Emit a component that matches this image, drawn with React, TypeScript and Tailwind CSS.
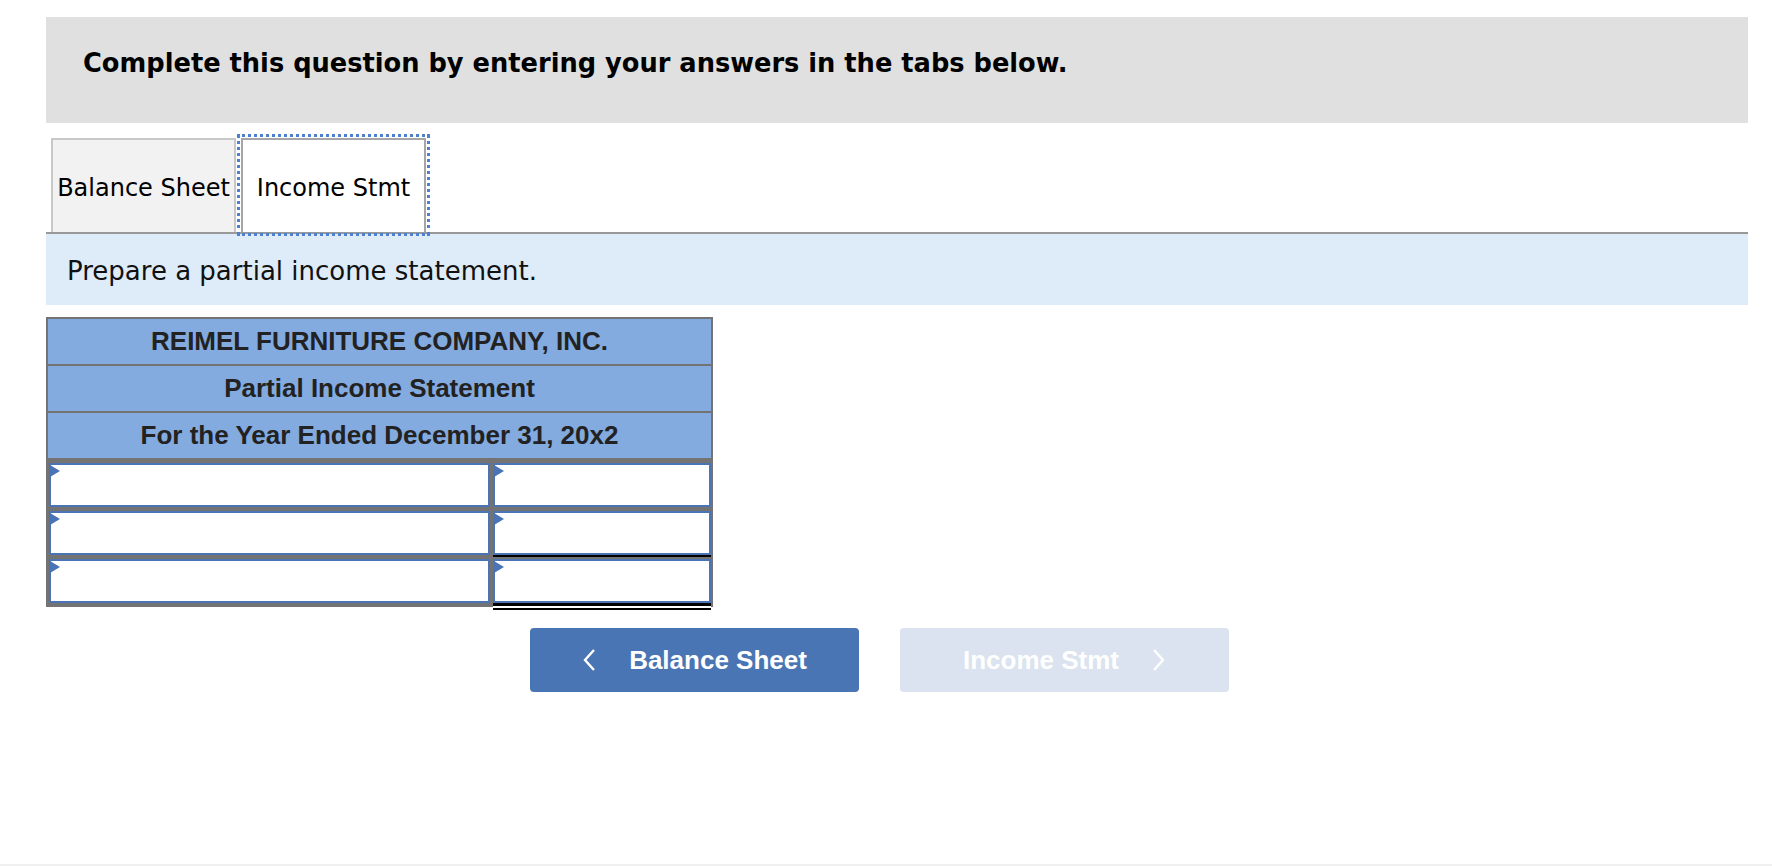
import React from "react";

function Marker() {
    return (
        <div className="h-0 w-0 shrink-0 -ml-[1px] border-y-[6px] border-y-transparent border-l-[10px] border-l-[#4a74b5]" />
    );
}

function AnswerCell({ className = "" }: { className?: string }) {
    return (
        <div className={`flex h-[44px] min-w-0 items-start border-2 border-[#4a74b5] bg-white ${className}`}>
            <Marker />
            <input className="h-full w-0 min-w-0 flex-1 bg-transparent px-2 text-[16px] font-normal outline-none" />
        </div>
    );
}

export default function App() {
    const rows = [
        { right: "" },
        { right: "shadow-[0_2px_0_0_#000]" },
        { right: "shadow-[0_3px_0_0_#000,0_5px_0_0_#fff,0_7px_0_0_#000]" },
    ];

    return (
        <div className="flex h-[866px] w-full flex-col bg-white font-['DejaVu_Sans',Verdana,sans-serif] text-black">
            <div className="ml-[46px] mt-[17px] w-[1702px]">
                {/* instructions header */}
                <div className="h-[106px] bg-[#e0e0e0] pl-[37px] pt-[31px]">
                    <h1 className="text-[25.7px] font-bold leading-[30px]">
                        Complete this question by entering your answers in the tabs below.
                    </h1>
                </div>

                {/* tabs */}
                <div className="mt-[15px] flex gap-[5px] border-b-2 border-[#999999] pl-[5px]">
                    <button className="flex h-[94px] w-[185px] items-center justify-center border-2 border-b-0 border-[#c8c8c8] bg-[#f2f2f2] pt-[4px] text-[24px]">
                        Balance Sheet
                    </button>
                    <button className="flex h-[94px] w-[185px] items-center justify-center border-2 border-b-0 border-[#a6a6a6] bg-white pt-[4px] text-[24px] outline-[3px] outline-offset-1 outline-dotted outline-[#4f7fd0]">
                        Income Stmt
                    </button>
                </div>

                <div className="flex h-[71px] items-center bg-[#deebf8] pl-[21px] pt-[4px] text-[26px] text-[#111]">
                    Prepare a partial income statement.
                </div>

                {/* statement table */}
                <div className="mt-[12px] w-[667px] border-2 border-[#737373] bg-[#737373] font-['Liberation_Sans',Arial,sans-serif] text-[26px] font-bold text-[#222]">
                    <div className="flex h-[47px] items-center justify-center border-b-2 border-[#737373] bg-[#83abe0]">
                        REIMEL FURNITURE COMPANY, INC.
                    </div>
                    <div className="flex h-[47px] items-center justify-center border-b-2 border-[#737373] bg-[#83abe0]">
                        Partial Income Statement
                    </div>
                    <div className="flex h-[47px] items-center justify-center border-b-2 border-[#737373] bg-[#83abe0]">
                        For the Year Ended December 31, 20x2
                    </div>
                    <div className="flex flex-col gap-[4px] pb-[2px] pl-[1px] pt-[3px]">
                        {rows.map((r, i) => (
                            <div key={i} className="flex gap-[3px]">
                                <AnswerCell className="w-[441px] shrink-0" />
                                <AnswerCell className={`flex-1 ${r.right}`} />
                            </div>
                        ))}
                    </div>
                </div>

                {/* nav buttons */}
                <div className="ml-[484px] mt-[21px] flex gap-[41px] font-['Liberation_Sans',Arial,sans-serif] text-[26px] font-bold text-white">
                    <button className="flex h-[64px] w-[329px] items-center justify-center gap-[33px] rounded-[4px] bg-[#4a75b4]">
                        <svg width="14" height="24" viewBox="0 0 14 24" fill="none">
                            <polyline points="12,2 3,12 12,22" stroke="white" strokeWidth="2.4" />
                        </svg>
                        <span>Balance Sheet</span>
                    </button>
                    <button className="flex h-[64px] w-[329px] items-center justify-center gap-[33px] rounded-[4px] bg-[#dae3ef]">
                        <span>Income Stmt</span>
                        <svg width="14" height="24" viewBox="0 0 14 24" fill="none">
                            <polyline points="2,2 11,12 2,22" stroke="white" strokeWidth="2.4" />
                        </svg>
                    </button>
                </div>
            </div>

            <div className="mt-auto h-[2px] w-full bg-[#f0f0f0]" />
        </div>
    );
}
